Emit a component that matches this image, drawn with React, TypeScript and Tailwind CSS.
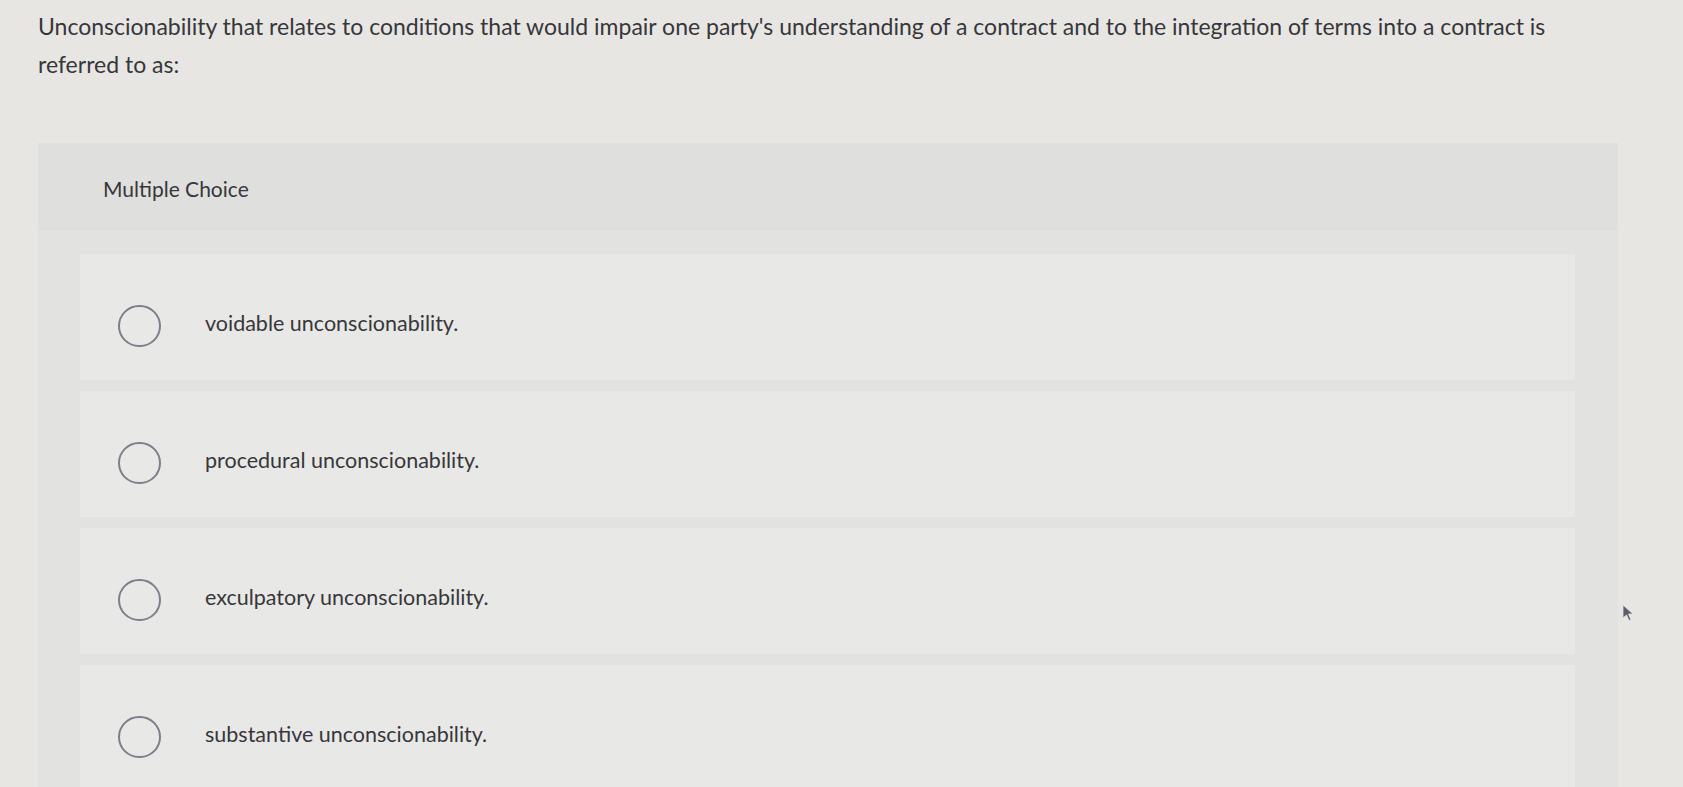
const OPTIONS = [
  'voidable unconscionability.',
  'procedural unconscionability.',
  'exculpatory unconscionability.',
  'substantive unconscionability.',
];

function Radio() {
  return (
    <span className="block w-[43px] h-[42px] shrink-0 rounded-full border-2 border-[#7f7f8c]" />
  );
}

export default function App() {
  return (
    <div
      className="relative min-h-screen w-full overflow-hidden bg-[#e7e6e3] text-[#37373b]"
      style={{ fontFamily: 'Lato, "Open Sans", sans-serif' }}
    >
      {/* Question */}
      <p className="ml-[38px] pt-[7px] w-[1560px] text-[23px] leading-[38px]">
        Unconscionability that relates to conditions that would impair one party's understanding of a contract and to the
        integration of terms into a contract is referred to as:
      </p>

      {/* Answer panel */}
      <div className="ml-[38px] mt-[60px] w-[1580px] bg-[#dfdfdd] pb-[20px]">
        <div className="h-[88px] pl-[65px] pt-[4px] flex items-center text-[21px]">Multiple Choice</div>
        <div className="bg-[#e2e2e0] px-[42px] pt-[23px] flex flex-col gap-[11px]">
          {OPTIONS.map((opt) => (
            <div key={opt} className="h-[126px] w-[1495px] bg-[#e8e8e6] flex items-center pl-[38px] pt-[18px] gap-[44px]">
              <Radio />
              <span className="text-[21.5px] -mt-[6px]">{opt}</span>
            </div>
          ))}
        </div>
      </div>

      {/* Mouse pointer */}
      <svg className="absolute left-[1622px] top-[604px]" width="14" height="18" viewBox="0 0 14 18">
        <path d="M1 1 L1 14 L4.5 11 L7 16.5 L9 15.5 L6.5 10 L11 10 Z" fill="#5d5f6b" stroke="#e7e6e3" strokeWidth="0.8" />
      </svg>
    </div>
  );
}
